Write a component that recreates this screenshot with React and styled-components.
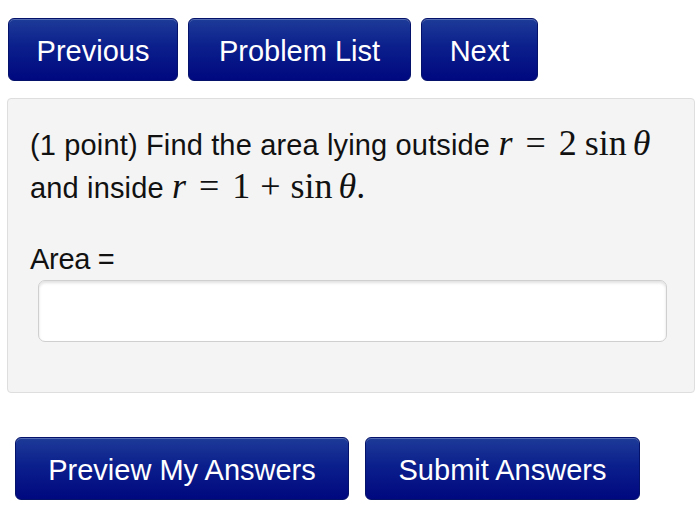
import React from 'react';
import styled, { createGlobalStyle } from 'styled-components';

const GlobalStyle = createGlobalStyle`
  html, body {
    margin: 0;
    padding: 0;
    background: #ffffff;
  }
  body {
    font-family: "Liberation Sans", Arial, Helvetica, sans-serif;
    color: #111;
  }
`;

const Page = styled.div`
  width: 700px;
  height: 531px;
  box-sizing: border-box;
  padding: 18px 5px 0 7px;
  display: flex;
  flex-direction: column;
`;

const ButtonRow = styled.div`
  display: flex;
  gap: ${(p) => p.$gap || 10}px;
  padding-left: ${(p) => p.$indent || 1}px;
`;

const NavButton = styled.button`
  width: ${(p) => p.$w}px;
  height: 63px;
  box-sizing: border-box;
  padding: 3px 0 0 0;
  border: 1px solid #04126a;
  border-radius: 6px;
  background: linear-gradient(to bottom, #1d3b98 0%, #0b1f8c 45%, #00087f 100%);
  box-shadow: inset 0 1px 0 rgba(255, 255, 255, 0.25);
  color: #ffffff;
  font-family: "Liberation Sans", Arial, sans-serif;
  font-size: 29px;
  text-align: center;
  cursor: pointer;
`;

const Panel = styled.div`
  margin-top: 17px;
  width: 688px;
  height: 295px;
  box-sizing: border-box;
  background: #f4f4f4;
  border: 1px solid #dedede;
  border-radius: 4px;
  padding: 24px 22px 0 22px;
`;

const Question = styled.p`
  margin: 0;
  font-size: 29px;
  line-height: 41px;
  letter-spacing: 0.15px;
`;

const Math = styled.span`
  font-family: "Liberation Serif", "Times New Roman", serif;
  font-size: 36px;
  letter-spacing: 0;
  white-space: nowrap;
`;

const Var = styled.i`
  font-style: italic;
`;

const Op = styled.span`
  padding: 0 ${(p) => p.$space ?? 13}px;
`;

const Label = styled.div`
  margin-top: 30px;
  font-size: 29px;
  line-height: 41px;
  letter-spacing: -0.3px;
`;

const AnswerInput = styled.input`
  display: block;
  margin: 0 0 0 8px;
  width: 629px;
  height: 62px;
  box-sizing: border-box;
  border: 1px solid #cfcfcf;
  border-radius: 7px;
  background: #ffffff;
  box-shadow: inset 0 2px 3px rgba(0, 0, 0, 0.12);
  font-size: 26px;
  padding: 0 12px;
  outline: none;
`;

const Footer = styled.div`
  margin-top: 44px;
`;

export default function App() {
  return (
    <>
      <GlobalStyle />
      <Page>
        <ButtonRow>
          <NavButton $w={170}>Previous</NavButton>
          <NavButton $w={223}>Problem List</NavButton>
          <NavButton $w={117}>Next</NavButton>
        </ButtonRow>

        <Panel>
          <Question>
            (1 point) Find the area lying outside{' '}
            <Math>
              <Var>r</Var>
              <Op>=</Op>2<Op $space={4}></Op>sin<Op $space={3}></Op>
              <Var>θ</Var>
            </Math>
            <br />
            and inside{' '}
            <Math>
              <Var>r</Var>
              <Op>=</Op>1<Op $space={10}>+</Op>sin<Op $space={3}></Op>
              <Var>θ</Var>.
            </Math>
          </Question>

          <Label>Area =</Label>
          <AnswerInput type="text" aria-label="Area" />
        </Panel>

        <Footer>
          <ButtonRow $gap={16} $indent={8}>
            <NavButton $w={334}>Preview My Answers</NavButton>
            <NavButton $w={275}>Submit Answers</NavButton>
          </ButtonRow>
        </Footer>
      </Page>
    </>
  );
}
